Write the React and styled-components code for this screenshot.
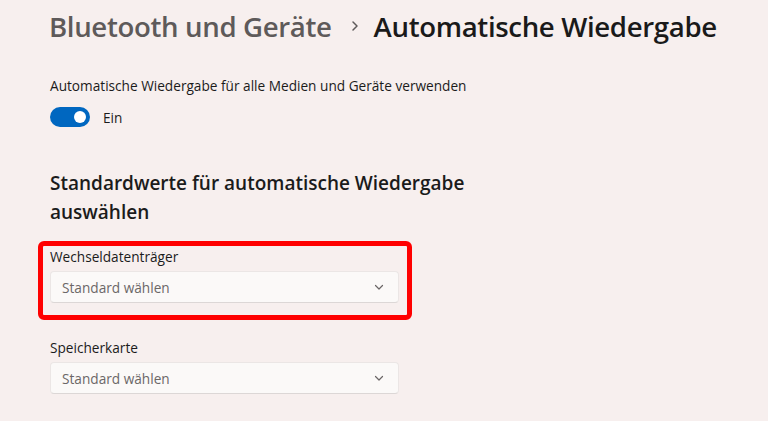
import React from "react";
import styled, { createGlobalStyle } from "styled-components";

const Global = createGlobalStyle`
  html, body { margin: 0; padding: 0; background: #f7efee; }
  body { font-family: "Segoe UI", "Open Sans", "Noto Sans", sans-serif; color: #1b1b1b; }
`;

const Page = styled.div`
  width: 768px;
  height: 421px;
  overflow: hidden;
  box-sizing: border-box;
  padding: 6px 0 0 49px;
  background: #f7efee;
`;

const Breadcrumb = styled.h1`
  display: flex;
  align-items: center;
  margin: 0;
  font-size: 27.6px;
  font-weight: 600;
  line-height: 40px;
  letter-spacing: -0.35px;
`;

const Crumb = styled.span`
  color: ${(p) => (p.$current ? "#1a1a1a" : "#5e5a5a")};
`;

const Sep = styled.span`
  display: flex;
  align-items: center;
  margin: 0 15px 0 19px;
  color: #5e5a5a;
`;

const Section = styled.div`
  margin-top: 30px;
  padding-left: 1px;
`;

const SettingLabel = styled.div`
  font-size: 13.65px;
  line-height: 20px;
  color: #1b1b1b;
`;

const ToggleRow = styled.div`
  display: flex;
  align-items: center;
  gap: 13px;
  margin-top: 11px;
  font-size: 13.65px;
  color: #1b1b1b;
`;

const Toggle = styled.div`
  width: 40px;
  height: 20px;
  border-radius: 10px;
  background: #0067c0;
  position: relative;
  flex: none;
`;

const Knob = styled.div`
  position: absolute;
  width: 12px;
  height: 12px;
  border-radius: 50%;
  background: #fff;
  top: 4px;
  right: 4px;
`;

const Heading = styled.h2`
  margin: 42px 0 0;
  max-width: 440px;
  font-size: 19px;
  font-weight: 600;
  line-height: 29px;
  color: #1b1b1b;
`;

const Highlight = styled.div`
  margin: 14px 0 0 -11px;
  width: 374px;
  box-sizing: border-box;
  border: 5px solid #ff0000;
  border-radius: 6px;
  padding: 1px 0 0 7px;
  height: 79px;
`;

const Body = styled.div`
  padding-left: 1px;
`;

const Field = styled.div`
  display: flex;
  flex-direction: column;
  gap: 4px;
  margin-top: ${(p) => p.$mt || 0}px;
`;

const FieldLabel = styled.div`
  font-size: 13.65px;
  line-height: 20px;
  color: #1b1b1b;
`;

const Select = styled.div`
  width: 349px;
  height: 32px;
  box-sizing: border-box;
  display: flex;
  align-items: center;
  justify-content: space-between;
  padding: 0 14px 0 11px;
  background: #fbf9f8;
  border: 1px solid #ebe6e5;
  border-bottom-color: #dcd7d6;
  border-radius: 4px;
  font-size: 13.65px;
  color: #6b6767;
`;

const Chevron = () => (
  <svg width="10" height="10" viewBox="0 0 10 10" fill="none">
    <path d="M1.5 3.5 L5 7 L8.5 3.5" stroke="#6a6666" strokeWidth="1.2" strokeLinecap="round" strokeLinejoin="round" />
  </svg>
);

const CrumbChevron = () => (
  <svg width="8" height="12" viewBox="0 0 8 12" fill="none">
    <path d="M2 2 L6 6 L2 10" stroke="#5e5a5a" strokeWidth="1.5" strokeLinecap="round" strokeLinejoin="round" />
  </svg>
);

export default function App() {
  return (
    <>
      <Global />
      <Page>
        <Breadcrumb>
          <Crumb>Bluetooth und Geräte</Crumb>
          <Sep><CrumbChevron /></Sep>
          <Crumb $current>Automatische Wiedergabe</Crumb>
        </Breadcrumb>
        <Section>
          <SettingLabel>Automatische Wiedergabe für alle Medien und Geräte verwenden</SettingLabel>
          <ToggleRow>
            <Toggle><Knob /></Toggle>
            <span>Ein</span>
          </ToggleRow>
        </Section>
        <Body>
          <Heading>Standardwerte für automatische Wiedergabe auswählen</Heading>
        </Body>
        <Highlight>
          <Field>
            <FieldLabel>Wechseldatenträger</FieldLabel>
            <Select>Standard wählen<Chevron /></Select>
          </Field>
        </Highlight>
        <Body>
          <Field $mt={18}>
            <FieldLabel>Speicherkarte</FieldLabel>
            <Select>Standard wählen<Chevron /></Select>
          </Field>
        </Body>
      </Page>
    </>
  );
}
